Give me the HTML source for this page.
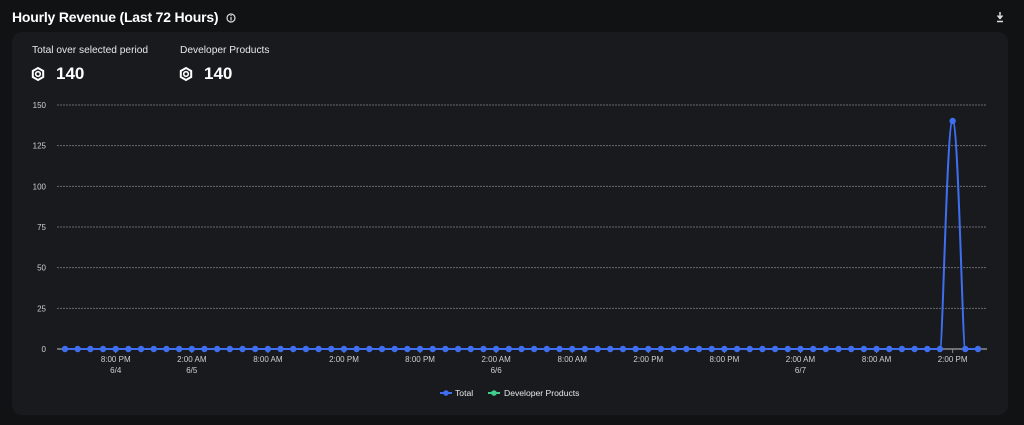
<!DOCTYPE html>
<html><head><meta charset="utf-8"><style>
html,body{margin:0;padding:0;background:#111214;width:1024px;height:425px;overflow:hidden;font-family:"Liberation Sans",sans-serif;color:#fff}
.title{position:absolute;left:12px;top:9px;font-size:14px;font-weight:bold;letter-spacing:-0.2px}
.card{position:absolute;left:12px;top:32px;width:996px;height:383px;background:#191a1e;border-radius:10px}
.lbl{position:absolute;font-size:10.2px;color:#e8e8e8}
.val{position:absolute;font-size:17px;font-weight:bold}
svg{position:absolute;left:0;top:0}
</style></head><body>
<div class="title">Hourly Revenue (Last 72 Hours)</div>
<svg width="1024" height="425" id="s">
<circle cx="231" cy="18" r="4" fill="none" stroke="#ddd" stroke-width="1.2"/>
<rect x="230.4" y="17" width="1.2" height="3.5" fill="#ddd"/><rect x="230.4" y="15" width="1.2" height="1.2" fill="#ddd"/>
<path d="M1000 12v6M997.5 15.5l2.5 3 2.5-3M997 21.5h6" stroke="#ddd" stroke-width="1.5" fill="none"/>
</svg>
<div class="card"></div>
<div class="lbl" style="left:32px;top:45px">Total over selected period</div>
<div class="lbl" style="left:180px;top:45px">Developer Products</div>
<div class="val" style="left:56px;top:64px">140</div>
<div class="val" style="left:204px;top:64px">140</div>
<svg width="1024" height="425" id="c"></svg>
<script>
var s='';
function hex(cx,cy){var p=[];for(var i=0;i<6;i++){var a=Math.PI/3*i+Math.PI/6;p.push((cx+6*Math.cos(a)).toFixed(1)+','+(cy+6*Math.sin(a)).toFixed(1));}
return '<polygon points="'+p.join(' ')+'" fill="none" stroke="#fff" stroke-width="2"/><circle cx="'+cx+'" cy="'+cy+'" r="2.3" fill="none" stroke="#fff" stroke-width="1.6"/>';}
s+=hex(38,74)+hex(186,74);
var ys=[0,25,50,75,100,125,150];
ys.forEach(function(v,i){var y=349-i*40.67;
s+='<text x="46" y="'+(y+3)+'" fill="#cfcfcf" font-size="8" text-anchor="end" font-family="Liberation Sans">'+v+'</text>';
if(i>0)s+='<line x1="57" x2="987" y1="'+y+'" y2="'+y+'" stroke="#6a6b70" stroke-width="1" stroke-dasharray="2,1"/>';});
s+='<line x1="57" x2="987" y1="349" y2="349" stroke="#8a8b8f" stroke-width="1.5"/>';
var sp=913/72;
var labs=['8:00 PM','2:00 AM','8:00 AM','2:00 PM'];
for(var k=0;k<12;k++){var x=65+(4+6*k)*sp;
s+='<line x1="'+x+'" x2="'+x+'" y1="349" y2="353" stroke="#8a8b8f"/>';
s+='<text x="'+x+'" y="362" fill="#cfcfcf" font-size="8" text-anchor="middle" font-family="Liberation Sans">'+labs[k%4]+'</text>';
var d=k==0?'6/4':k==1?'6/5':k==5?'6/6':k==9?'6/7':'';
if(d)s+='<text x="'+x+'" y="373" fill="#cfcfcf" font-size="8" text-anchor="middle" font-family="Liberation Sans">'+d+'</text>';}
var x69=65+69*sp,x70=65+70*sp,x71=65+71*sp;
s+='<path d="M65 349H'+x69+' C'+(x69+3)+' 349 '+(x70-6)+' 121 '+x70+' 121 C'+(x70+6)+' 121 '+(x71-3)+' 349 '+x71+' 349 H978" fill="none" stroke="#3f6ff0" stroke-width="2"/>';
for(var i=0;i<=72;i++){var x=65+i*sp;s+='<circle cx="'+x+'" cy="'+(i==70?121:349)+'" r="3.2" fill="#3f6ff0"/>';}
s+='<line x1="440" x2="452" y1="393" y2="393" stroke="#3f6ff0" stroke-width="2"/><circle cx="446" cy="393" r="2.8" fill="#3f6ff0"/>';
s+='<text x="455" y="396" fill="#e8e8e8" font-size="8.6" font-family="Liberation Sans">Total</text>';
s+='<line x1="488" x2="500" y1="393" y2="393" stroke="#3ecf8e" stroke-width="2"/><circle cx="494" cy="393" r="2.8" fill="#3ecf8e"/>';
s+='<text x="504" y="396" fill="#e8e8e8" font-size="8.6" font-family="Liberation Sans">Developer Products</text>';
document.getElementById('c').innerHTML=s;
</script>
</body></html>
